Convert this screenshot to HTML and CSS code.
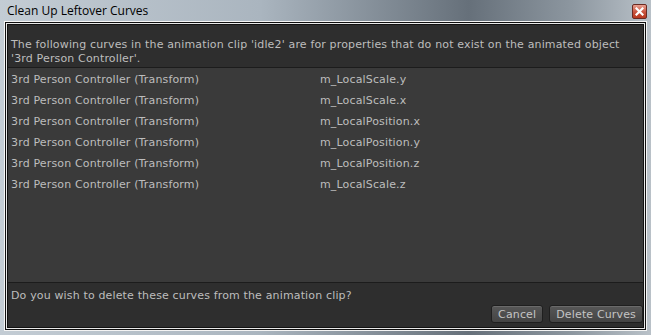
FILE: index.html
```html
<!DOCTYPE html>
<html lang="en">
<head>
<meta charset="utf-8">
<title>Clean Up Leftover Curves</title>
<link rel="stylesheet" href="styles.css">
</head>
<body>

<div class="window">
    <div class="titlebar">
        <span class="title">Clean Up Leftover Curves</span>
        <span class="close">
            <svg width="9" height="9" viewBox="0 0 9 9"><path d="M1.5 1.5 L7.5 7.5 M7.5 1.5 L1.5 7.5" stroke="#fff" stroke-width="2.2" stroke-linecap="square"/></svg>
        </span>
    </div>
    <div class="frame">
        <div class="dialog">
            <div class="header">
                The following curves in the animation clip 'idle2' are for properties that do not exist on the animated object<br>
                '3rd Person Controller'.
            </div>
            <div class="list">
                <div class="row"><span class="obj">3rd Person Controller (Transform)</span><span>m_LocalScale.y</span></div>
                <div class="row"><span class="obj">3rd Person Controller (Transform)</span><span>m_LocalScale.x</span></div>
                <div class="row"><span class="obj">3rd Person Controller (Transform)</span><span>m_LocalPosition.x</span></div>
                <div class="row"><span class="obj">3rd Person Controller (Transform)</span><span>m_LocalPosition.y</span></div>
                <div class="row"><span class="obj">3rd Person Controller (Transform)</span><span>m_LocalPosition.z</span></div>
                <div class="row"><span class="obj">3rd Person Controller (Transform)</span><span>m_LocalScale.z</span></div>
            </div>
            <div class="footer">
                <div class="question">Do you wish to delete these curves from the animation clip?</div>
                <div class="buttons">
                    <button>Cancel</button>
                    <button>Delete Curves</button>
                </div>
            </div>
        </div>
    </div>
</div>

</body>
</html>
```

FILE: styles.css
```css
*,*:after,*:before{
	box-sizing: border-box;
}
body{
	margin: 0;
	width: 651px;
	height: 335px;
	overflow: hidden;
	font-family: "DejaVu Sans", sans-serif;
}

.window{
	height: 335px;
	display: flex;
	flex-direction: column;
	padding: 0 4px 4px 4px;
	background: linear-gradient(to right, #c3ccd4 0%, #aab5bf 40%, #66707a 72%, #8d97a0 88%, #b9c1c8 100%);
}
.titlebar{
	height: 21px;
	display: flex;
	align-items: center;
	justify-content: space-between;
	padding: 0 0 0 3px;
}
.title{
	font-family: "Open Sans", sans-serif;
	font-size: 12px;
	color: #000;
}
.close{
	width: 15px;
	height: 15px;
	margin-top: 1px;
	border: 1px solid #6b2a22;
	border-radius: 2px;
	background: linear-gradient(#e8a091, #c9523c 55%, #b8381f);
	display: flex;
	align-items: center;
	justify-content: center;
}

.frame{
	flex: 1;
	display: flex;
	border: 1px solid #f4f4f4;
	background: #101010;
	padding: 1px;
}
.dialog{
	flex: 1;
	display: flex;
	flex-direction: column;
	border: 1px solid #e8e8e8;
	outline: 1px solid #111;
	outline-offset: -2px;
	background: #2e2e2e;
	color: #bdbdbd;
	font-size: 11px;
	letter-spacing: 0.15px;
}

.header{
	padding: 14px 4px 0 4px;
	height: 44px;
	line-height: 14px;
	background: #2e2e2e;
	border-bottom: 1px solid #1c1c1c;
}
.list{
	flex: 1;
	padding-top: 1px;
	background: #3a3a3a;
	border-bottom: 1px solid #1c1c1c;
}
.row{
	display: flex;
	height: 21px;
	align-items: center;
	padding-left: 4px;
}
.obj{
	width: 309px;
}

.footer{
	height: 45px;
	padding: 6px 1px 0 4px;
	background: #2e2e2e;
}
.buttons{
	display: flex;
	justify-content: flex-end;
	gap: 6px;
	margin-top: 3px;
}
button{
	font-family: "DejaVu Sans", sans-serif;
	font-size: 11px;
	letter-spacing: 0.15px;
	color: #c4c4c4;
	height: 18px;
	padding: 0 6px;
	border: 1px solid #1f1f1f;
	border-radius: 3px;
	background: linear-gradient(#575757, #444);
	box-shadow: inset 0 1px 0 #6a6a6a;
}
```
